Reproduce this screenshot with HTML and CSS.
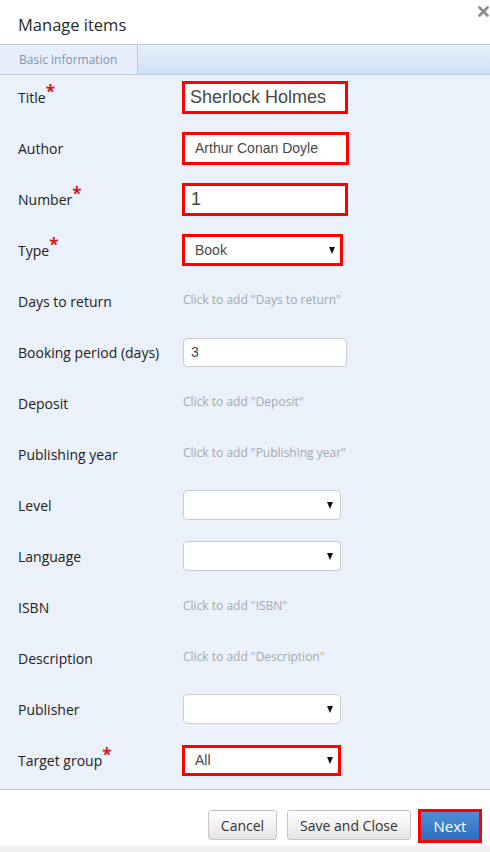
FILE: index.html
```html
<!DOCTYPE html>
<html>
<head>
<meta charset="utf-8">
<link rel="stylesheet" href="styles.css">
</head>
<body>
<div class="modal">
  <div class="header">
    <h1 class="title">Manage items</h1>
    <svg class="close" width="11" height="11" viewBox="0 0 11 11"><path d="M1.5 1.5 L9.5 9.5 M9.5 1.5 L1.5 9.5" stroke="#8a8a8a" stroke-width="2.6" stroke-linecap="round"/></svg>
  </div>
  <div class="tabs">
    <div class="tab">Basic information</div>
  </div>
  <div class="body">
    <div class="row"><div class="label">Title<span class="req">*</span></div><div class="field hl big w166">Sherlock Holmes</div></div>
    <div class="row"><div class="label">Author</div><div class="field hl mid w167 ind">Arthur Conan Doyle</div></div>
    <div class="row"><div class="label">Number<span class="req">*</span></div><div class="field hl big w166 num">1</div></div>
    <div class="row"><div class="label">Type<span class="req">*</span></div><div class="field hl mid select w161 h32">Book<span class="arrow"></span></div></div>
    <div class="row"><div class="label">Days to return</div><div class="hint">Click to add "Days to return"</div></div>
    <div class="row"><div class="label">Booking period (days)</div><div class="field plain mid w164">3</div></div>
    <div class="row"><div class="label">Deposit</div><div class="hint">Click to add "Deposit"</div></div>
    <div class="row"><div class="label">Publishing year</div><div class="hint">Click to add "Publishing year"</div></div>
    <div class="row"><div class="label">Level</div><div class="field plain select w158"><span class="arrow"></span></div></div>
    <div class="row"><div class="label">Language</div><div class="field plain select w158"><span class="arrow"></span></div></div>
    <div class="row"><div class="label">ISBN</div><div class="hint">Click to add "ISBN"</div></div>
    <div class="row"><div class="label">Description</div><div class="hint">Click to add "Description"</div></div>
    <div class="row"><div class="label">Publisher</div><div class="field plain select w158"><span class="arrow"></span></div></div>
    <div class="row"><div class="label">Target group<span class="req">*</span></div><div class="field hl mid select w159 h31">All<span class="arrow"></span></div></div>
  </div>
  <div class="footer">
    <button class="btn cancel">Cancel</button>
    <button class="btn save">Save and Close</button>
    <button class="btn next">Next</button>
  </div>
  <div class="bottom"></div>
</div>
</body>
</html>
```
FILE: styles.css
```css
html, body {
  margin: 0;
  padding: 0;
  background: #ffffff;
}
.modal {
  width: 490px;
  height: 852px;
  display: flex;
  flex-direction: column;
  font-family: "Open Sans", "DejaVu Sans", sans-serif;
  color: #222;
  overflow: hidden;
}
.header {
  position: relative;
  height: 45px;
  background: #fff;
  border-bottom: 1px solid #bccbdc;
  box-sizing: border-box;
  flex: none;
}
.title {
  margin: 0;
  padding: 13px 0 0 18px;
  font-size: 16.5px;
  font-weight: 400;
  color: #2a2a2a;
  line-height: 24px;
}
.close {
  position: absolute;
  right: 1px;
  top: 6px;
}
.tabs {
  height: 30px;
  flex: none;
  box-sizing: border-box;
  display: flex;
  background: linear-gradient(#e6f0fc, #cfe0f6);
  border-bottom: 1px solid #b9cde3;
}
.tab {
  width: 138px;
  box-sizing: border-box;
  background: #e5eefa;
  border-right: 1px solid #b4c8e0;
  font-size: 12px;
  color: #7f93b3;
  padding-left: 19px;
  line-height: 29px;
}
.body {
  flex: none;
  height: 715px;
  box-sizing: border-box;
  background: #eaf1fa;
  border-bottom: 1px solid #c4ccd6;
  display: flex;
  flex-direction: column;
  gap: 7px;
}
.row {
  height: 44px;
  display: flex;
  align-items: center;
  flex: none;
}
.label {
  width: 183px;
  padding-left: 18px;
  box-sizing: border-box;
  font-size: 14px;
  color: #222;
  flex: none;
}
.req {
  color: #cc1a1a;
  font-weight: 700;
  font-size: 17px;
  position: relative;
  top: -5px;
  margin-left: 0;
  line-height: 0;
}
.field {
  box-sizing: border-box;
  background: #fff;
  font-family: "Liberation Sans", Arial, sans-serif;
  color: #474747;
  display: flex;
  align-items: center;
  position: relative;
  flex: none;
}
.hl {
  border: 3px solid #ff0000;
  margin-left: -1px;
  height: 33px;
  padding-left: 5px;
}
.plain {
  border: 1px solid #c9cdd2;
  border-radius: 4px;
  height: 30px;
  padding-left: 7px;
}
.big { font-size: 18px; }
.mid { font-size: 14px; }
.ind { padding-left: 10px; }
.num { padding-left: 6px; }
.select.hl { padding-left: 10px; }
.w166 { width: 166px; }
.w167 { width: 167px; }
.w164 { width: 164px; height: 29px; }
.w161 { width: 161px; }
.w159 { width: 159px; }
.w158 { width: 158px; }
.h32 { height: 32px; }
.h31 { height: 31px; }
.arrow {
  position: absolute;
  right: 7px;
  top: 50%;
  margin-top: -3px;
  width: 0;
  height: 0;
  border-left: 3.5px solid transparent;
  border-right: 3.5px solid transparent;
  border-top: 7px solid #111;
}
.hl .arrow { right: 5px; }
.hint {
  font-size: 12px;
  color: #a5a9ae;
  margin-top: -3px;
}
.footer {
  flex: none;
  height: 55px;
  background: #fff;
  display: flex;
  justify-content: flex-end;
  align-items: flex-start;
  padding: 19px 8px 0 0;
  box-sizing: border-box;
}
.btn {
  font-family: "Open Sans", "DejaVu Sans", sans-serif;
  font-size: 14px;
  color: #333;
  height: 30px;
  border: 1px solid #c6c6c6;
  border-radius: 3px;
  background: linear-gradient(#ffffff, #e4e4e4);
  padding: 0;
  margin: 0;
  box-sizing: border-box;
}
.cancel { width: 69px; margin-top: 1px; }
.save { width: 124px; margin-left: 10px; margin-top: 1px; }
.next {
  width: 64px;
  height: 34px;
  margin-left: 7px;
  border: 3px solid #ff0000;
  border-radius: 0;
  background: linear-gradient(#4f8fd6, #2e6cbf);
  color: #fff;
  font-size: 15px;
}
.bottom {
  flex: 1;
  background: linear-gradient(#f4f4f4, #ececec);
}
```
